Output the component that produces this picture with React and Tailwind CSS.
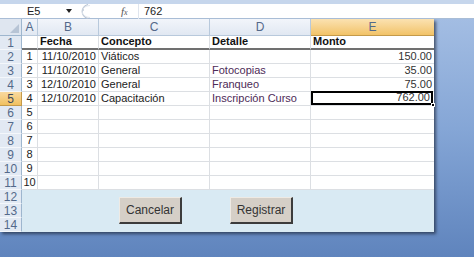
import React from "react";

const rows = [
  { n: 1, a: "", b: "Fecha", c: "Concepto", d: "Detalle", e: "Monto", head: true },
  { n: 2, a: "1", b: "11/10/2010", c: "Viáticos", d: "", e: "150.00" },
  { n: 3, a: "2", b: "11/10/2010", c: "General", d: "Fotocopias", e: "35.00" },
  { n: 4, a: "3", b: "12/10/2010", c: "General", d: "Franqueo", e: "75.00" },
  { n: 5, a: "4", b: "12/10/2010", c: "Capacitación", d: "Inscripción Curso", e: "762.00", sel: true },
  { n: 6, a: "5" },
  { n: 7, a: "6" },
  { n: 8, a: "7" },
  { n: 9, a: "8" },
  { n: 10, a: "9" },
  { n: 11, a: "10" },
];

function RowHead({ n, sel }) {
  return (
    <div
      className={
        "h-[14px] flex items-center justify-center text-[12px] leading-[14px] border-b border-r " +
        (sel
          ? "bg-gradient-to-b from-[#f9d99f] to-[#f1c15f] border-[#c49a4a] text-[#3d4a5c]"
          : "bg-[#e2e9f3] border-b-[#f4f7fb] border-r-[#9eb6ce] text-[#54698a]")
      }
    >
      {n}
    </div>
  );
}

function Cell({ children, className = "" }) {
  return (
    <div
      className={
        "h-[14px] flex items-end px-[2px] text-[11px] leading-[13px] whitespace-nowrap overflow-hidden border-b border-r border-[#dcdfe3] bg-white " +
        className
      }
    >
      {children}
    </div>
  );
}

export default function App() {
  return (
    <div className="w-[474px] h-[257px] overflow-hidden bg-gradient-to-b from-[#a8c1e5] via-[#85a6d6] to-[#5f84bd] font-['Liberation_Sans',Arial,sans-serif]">
      {/* formula bar */}
      <div className="h-[4px] bg-[#c6d6ec]" />
      <div className="h-[15px] bg-white border-b border-[#a9bdd6] flex items-center text-[11px] text-[#222] relative">
        <div className="w-[64px] pl-[27px]">E5</div>
        <div className="w-[10px] flex items-center justify-center">
          <svg width="6" height="4" viewBox="0 0 6 4"><path d="M0 0H6L3 4Z" fill="#222" /></svg>
        </div>
        <div className="w-[18px] h-[15px] flex items-center">
          <svg width="18" height="15" viewBox="0 0 18 15">
            <path d="M14 0.5 A9 7.5 0 0 0 14 14.5" fill="none" stroke="#b9c4d2" strokeWidth="1.2" />
            <path d="M16 1.5 A8 6 0 0 0 16 13.5" fill="none" stroke="#dfe5ee" strokeWidth="1" />
            <circle cx="9" cy="6" r="1" fill="#c2ccd8" />
          </svg>
        </div>
        <div className="w-[29px]" />
        <div className="w-[13px] italic font-['Liberation_Serif',serif] text-[11px] text-[#555]">f<span className="text-[8px]">x</span></div>
        <div className="w-[1px] h-[15px] bg-[#dfe5ee] ml-[4px]" />
        <div className="pl-[5px]">762</div>
      </div>

      <div className="flex">
        <div className="w-[434px] shadow-[2px_2px_3px_rgba(30,40,60,0.7)]">
          <div className="grid grid-cols-[22px_16px_61px_111px_101px_123px]">
            {/* column headers */}
            <div className="h-[17px] bg-[#dfe6f0] border-r border-b border-[#9eb6ce] relative">
              <svg className="absolute right-[2px] bottom-[2px]" width="9" height="9" viewBox="0 0 9 9">
                <path d="M9 0V9H0Z" fill="#b7c4d5" />
              </svg>
            </div>
            {["A", "B", "C", "D"].map((l) => (
              <div
                key={l}
                className="h-[17px] flex items-center justify-center text-[12px] text-[#54698a] bg-gradient-to-b from-[#f2f5fa] to-[#e1e8f2] border-r border-b border-[#b8c9dc]"
              >
                {l}
              </div>
            ))}
            <div className="h-[17px] flex items-center justify-center text-[12px] text-[#54698a] bg-gradient-to-b from-[#fbe2b1] to-[#f2c367] border-b border-[#c49a4a]">
              E
            </div>

            {rows.map((r) => (
              <React.Fragment key={r.n}>
                <RowHead n={r.n} sel={r.sel} />
                <Cell className={"justify-center text-[#222] " + (r.head ? "border-b-2 border-b-[#707070]" : "")}>
                  {r.a}
                </Cell>
                <Cell
                  className={
                    (r.head ? "font-bold text-[#111] border-b-2 border-b-[#707070] " : "justify-end text-[#222] ")
                  }
                >
                  {r.b}
                </Cell>
                <Cell className={(r.head ? "font-bold text-[#111] border-b-2 border-b-[#707070] " : "text-[#222] ")}>
                  {r.c}
                </Cell>
                <Cell className={(r.head ? "font-bold text-[#111] border-b-2 border-b-[#707070] " : "text-[#4d2b57] ")}>
                  {r.d}
                </Cell>
                {r.sel ? (
                  <div className="h-[14px] relative bg-white border-b border-[#dcdfe3]">
                    <div className="absolute left-[0px] top-[-1px] right-[1px] bottom-[0px] border-2 border-black flex items-end justify-end pr-[1px] text-[11px] leading-[12px] text-[#333]">
                      762.00
                    </div>
                    <div className="absolute right-[-1px] bottom-[-2px] w-[4px] h-[4px] bg-black border border-white" />
                  </div>
                ) : (
                  <Cell
                    className={
                      r.head
                        ? "font-bold text-[#111] border-b-2 border-b-[#707070] border-r-0"
                        : "justify-end text-[#333] border-r-0"
                    }
                  >
                    {r.e}
                  </Cell>
                )}
              </React.Fragment>
            ))}

            {/* form area rows 12-14 */}
            <div className="flex flex-col">
              <RowHead n={12} />
              <RowHead n={13} />
              <RowHead n={14} />
            </div>
            <div className="col-span-5 h-[42px] bg-[#d9eaf3] flex items-start pt-[7px] pl-[97px] gap-[48px]">
              <button className="w-[63px] h-[27px] bg-[#d5cfc7] border-t border-l border-t-[#eeeae4] border-l-[#eeeae4] border-r-2 border-b-2 border-r-[#3c3c3c] border-b-[#3c3c3c] text-[12px] text-[#333] flex items-center justify-center">
                Cancelar
              </button>
              <button className="w-[63px] h-[27px] bg-[#d5cfc7] border-t border-l border-t-[#eeeae4] border-l-[#eeeae4] border-r-2 border-b-2 border-r-[#3c3c3c] border-b-[#3c3c3c] text-[12px] text-[#333] flex items-center justify-center">
                Registrar
              </button>
            </div>
          </div>
        </div>
      </div>
    </div>
  );
}
